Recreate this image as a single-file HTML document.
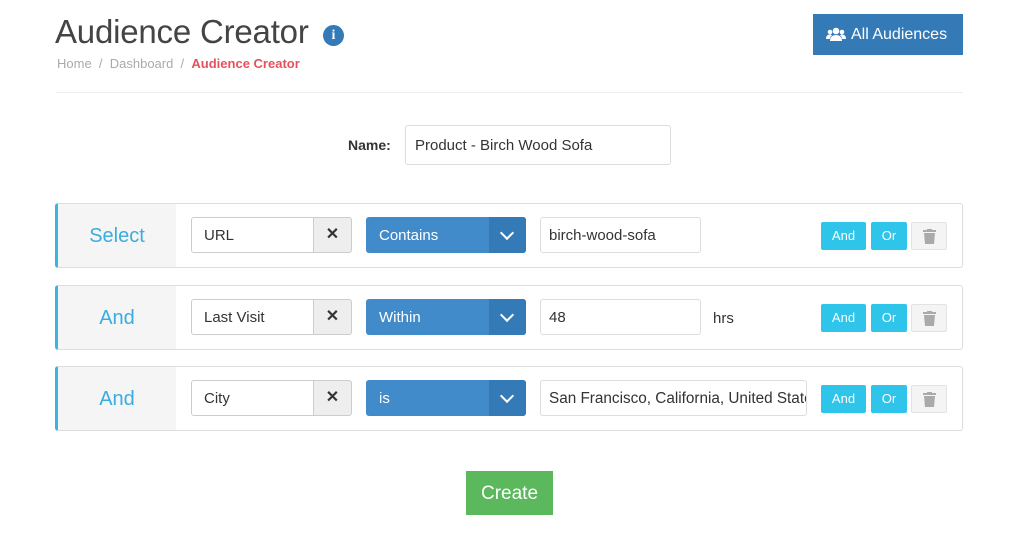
<!DOCTYPE html>
<html><head><style>
*{box-sizing:border-box;margin:0;padding:0}
body{width:1024px;height:541px;background:#fff;font-family:"Liberation Sans",sans-serif;color:#333;position:relative;overflow:hidden}
.a{position:absolute}
h1{position:absolute;left:55px;top:13px;font-size:33px;font-weight:normal;color:#444;letter-spacing:-0.2px}
.info{left:323px;top:25px;width:21px;height:21px;border-radius:50%;background:#337ab7;color:#fff;font:bold 14px "Liberation Serif",serif;text-align:center;line-height:21px}
.bc{left:57px;top:56px;font-size:13px;color:#aaa}
.bc b{color:#e8515b;font-weight:bold}
.btnall{left:813px;top:14px;width:150px;height:41px;background:#337ab7;color:#fff;font-size:16px;line-height:41px;padding-left:38px}
hr{position:absolute;left:56px;top:92px;width:907px;border:0;border-top:1px solid #eee}
.row{position:absolute;left:55px;width:908px;height:65px;border:1px solid #ddd;border-left:3px solid #3bb4e5;border-radius:3px}
.lab{position:absolute;left:0;top:0;width:118px;height:63px;background:#f5f5f5;color:#3aace0;font-size:20px;text-align:center;line-height:65px}
.inp{position:absolute;top:13px;height:36px;border:1px solid #ccc;border-radius:3px;background:#fff;font-size:15px;line-height:36px;padding-left:12px;color:#333;white-space:nowrap;overflow:hidden}
.x{position:absolute;top:13px;left:255px;width:39px;height:36px;background:#eee;border:1px solid #ccc;border-radius:0 3px 3px 0;text-align:center;line-height:34px;font-weight:bold;font-size:16px;color:#333}
.sel{position:absolute;top:13px;left:308px;width:160px;height:36px;background:#428bca;border-radius:3px;color:#fff;font-size:15px;line-height:38px;padding-left:13px}
.sel i{position:absolute;right:0;top:0;width:37px;height:36px;background:#337ab7;border-radius:0 3px 3px 0}
.sel i:after{content:"";position:absolute;left:13px;top:11px;width:8px;height:8px;border-right:2px solid #fff;border-bottom:2px solid #fff;transform:rotate(45deg)}
.b{position:absolute;top:18px;height:28px;background:#2fc4e9;color:#fff;font-size:13px;line-height:28px;text-align:center;border-radius:2px}
.t{position:absolute;top:18px;left:853px;width:36px;height:28px;background:#f4f4f4;border:1px solid #e3e3e3;border-radius:2px}
</style></head><body>
<h1>Audience Creator</h1>
<div class="a info">i</div>
<div class="a bc">Home &nbsp;/&nbsp; Dashboard &nbsp;/&nbsp; <b>Audience Creator</b></div>
<div class="a btnall"><svg class="a" style="left:13px;top:13px" width="20" height="15" viewBox="0 0 20 15" fill="#fff"><circle cx="10" cy="4" r="3.3"/><circle cx="4" cy="5" r="2.3"/><circle cx="16" cy="5" r="2.3"/><path d="M4 14c0-4 2.5-6 6-6s6 2 6 6z"/><path d="M0 12c0-3 1.5-4.5 4-4.5 1 0 1.5.3 2 .6C4.5 9.5 4 11 3.8 12z"/><path d="M20 12c0-3-1.5-4.5-4-4.5-1 0-1.5.3-2 .6 1.5 1.4 2 2.9 2.2 3.9z"/></svg>All Audiences</div>
<hr>
<div class="a" style="left:348px;top:137px;font-size:14px;font-weight:bold;color:#333">Name:</div>
<div class="a inp" style="left:405px;top:125px;width:266px;height:40px;line-height:40px;border-color:#ddd;padding-left:9px">Product - Birch Wood Sofa</div>

<div class="row" style="top:203px"><div class="lab">Select</div>
<div class="inp" style="left:133px;width:123px;border-radius:3px 0 0 3px">URL</div><div class="x">✕</div>
<div class="sel">Contains<i></i></div>
<div class="inp" style="left:482px;width:161px;border-color:#ddd;padding-left:8px">birch-wood-sofa</div>
<div class="b" style="left:763px;width:45px">And</div><div class="b" style="left:813px;width:36px">Or</div>
<div class="t"><svg class="a" style="left:11px;top:6px" width="13" height="15" viewBox="0 0 13 15" fill="#aaa"><rect x="0" y="1" width="13" height="2"/><rect x="4" y="0" width="5" height="2"/><path d="M1 4h11l-1 11H2z"/></svg></div></div>

<div class="row" style="top:285px"><div class="lab">And</div>
<div class="inp" style="left:133px;width:123px;border-radius:3px 0 0 3px">Last Visit</div><div class="x">✕</div>
<div class="sel">Within<i></i></div>
<div class="inp" style="left:482px;width:161px;border-color:#ddd;padding-left:8px">48</div>
<div class="a" style="left:655px;top:24px;font-size:15px">hrs</div>
<div class="b" style="left:763px;width:45px">And</div><div class="b" style="left:813px;width:36px">Or</div>
<div class="t"><svg class="a" style="left:11px;top:6px" width="13" height="15" viewBox="0 0 13 15" fill="#aaa"><rect x="0" y="1" width="13" height="2"/><rect x="4" y="0" width="5" height="2"/><path d="M1 4h11l-1 11H2z"/></svg></div></div>

<div class="row" style="top:366px"><div class="lab">And</div>
<div class="inp" style="left:133px;width:123px;border-radius:3px 0 0 3px">City</div><div class="x">✕</div>
<div class="sel">is<i></i></div>
<div class="inp" style="left:482px;width:267px;border-color:#ddd;padding-left:8px;font-size:15.3px">San Francisco, California, United States</div>
<div class="b" style="left:763px;width:45px">And</div><div class="b" style="left:813px;width:36px">Or</div>
<div class="t"><svg class="a" style="left:11px;top:6px" width="13" height="15" viewBox="0 0 13 15" fill="#aaa"><rect x="0" y="1" width="13" height="2"/><rect x="4" y="0" width="5" height="2"/><path d="M1 4h11l-1 11H2z"/></svg></div></div>

<div class="a" style="left:466px;top:471px;width:87px;height:44px;background:#5cb85c;color:#fff;font-size:19px;line-height:46px;text-align:center">Create</div>
</body></html>
